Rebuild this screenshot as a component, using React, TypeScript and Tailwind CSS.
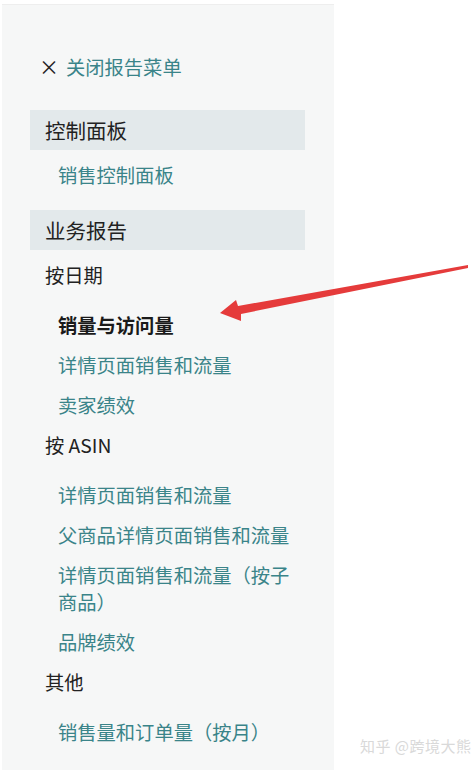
import React from 'react'

const font = { fontFamily: '"Noto Sans CJK SC", "Noto Sans", sans-serif' }

const Link = ({ children, bold }: { children: React.ReactNode; bold?: boolean }) => (
  <div
    className={`ml-[56px] w-[246px] py-[6.5px] text-[19.3px] leading-[27px] ${
      bold ? 'font-bold text-[#1a1a1a]' : 'text-[#3a8489]'
    }`}
  >
    {children}
  </div>
)

const Group = ({ children, className = '' }: { children: React.ReactNode; className?: string }) => (
  <div className={`ml-[43px] h-[40px] flex items-center text-[19.3px] text-[#222] ${className}`}>{children}</div>
)

const Bar = ({ children, className = '' }: { children: React.ReactNode; className?: string }) => (
  <div
    className={`ml-[28px] w-[275px] h-[40px] flex items-center pl-[15px] bg-[#e3e9eb] text-[20.5px] text-[#222] ${className}`}
  >
    {children}
  </div>
)

export default function App() {
  return (
    <div className="relative w-[474px] h-[775px] bg-white overflow-hidden" style={font}>
      <div className="ml-[2px] mt-[4px] w-[332px] h-[766px] bg-[#f6f7f7] border-t border-[#eeeeee] flex flex-col pt-[42px]">
        <div className="ml-[37px] h-[40px] flex items-center gap-[7px] text-[19.3px]">
          <span className="text-[#222] text-[20px] leading-none">×</span>
          <span className="text-[#3a8489]">关闭报告菜单</span>
        </div>

        <Bar className="mt-[23px]">控制面板</Bar>
        <div className="mt-[5px]">
          <Link>销售控制面板</Link>
        </div>

        <Bar className="mt-[15px]">业务报告</Bar>
        <Group className="mt-[5px]">按日期</Group>
        <div className="mt-[10px]">
          <Link bold>销量与访问量</Link>
        </div>
        <Link>详情页面销售和流量</Link>
        <Link>卖家绩效</Link>
        <Group>按 ASIN</Group>
        <div className="mt-[10px]">
          <Link>详情页面销售和流量</Link>
        </div>
        <Link>父商品详情页面销售和流量</Link>
        <Link>详情页面销售和流量（按子商品）</Link>
        <Link>品牌绩效</Link>
        <Group>其他</Group>
        <div className="mt-[10px]">
          <Link>销售量和订单量（按月）</Link>
        </div>
      </div>

      <svg className="absolute left-0 top-0" width="474" height="775" viewBox="0 0 474 775">
        <polygon
          points="220,313 236,300 238,306 468,265 468,268 241,314 241,321"
          fill="#e53b3b"
        />
      </svg>

      <div className="absolute left-[360px] top-[735px] text-[15px] text-[#d9d9d9] tracking-[0.5px]">
        知乎 @跨境大熊
      </div>
    </div>
  )
}
